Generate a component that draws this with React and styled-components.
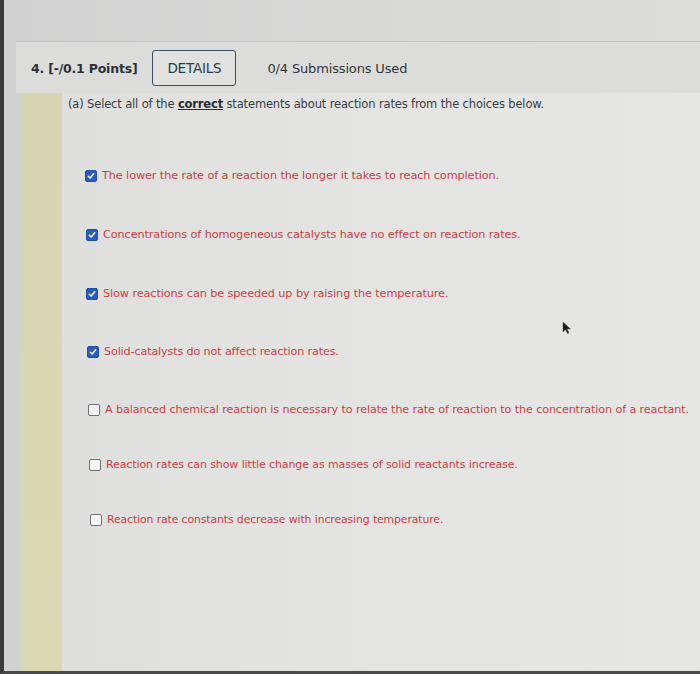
import React from "react";
import styled, { createGlobalStyle } from "styled-components";

const Global = createGlobalStyle`
  html, body {
    margin: 0;
    padding: 0;
    background: #d6d7d5;
  }
  body {
    font-family: "DejaVu Sans", Verdana, sans-serif;
  }
`;

const Screen = styled.div`
  position: relative;
  width: 700px;
  height: 674px;
  overflow: hidden;
  box-sizing: border-box;
  border-left: 4px solid #3b3b3d;
  border-bottom: 3px solid #4a4a4a;
  background: linear-gradient(90deg, #d1d2d1 0%, #d9dad8 60%, #dcdddb 100%);
  padding-top: 41px;
  display: flex;
  flex-direction: column;
`;

const Question = styled.div`
  margin-left: 12px;
  flex: 1;
  display: flex;
  flex-direction: column;
`;

const Header = styled.div`
  height: 52px;
  box-sizing: border-box;
  border-top: 1px solid #c4c5c3;
  background: #dcdddb;
  display: flex;
  align-items: center;
  padding: 1px 0 0 15px;
  color: #2e3136;
`;

const Points = styled.span`
  font-weight: bold;
  font-size: 12.5px;
  letter-spacing: -0.2px;
`;

const DetailsButton = styled.button`
  margin-left: 15px;
  width: 84px;
  height: 36px;
  box-sizing: border-box;
  border: 1.5px solid #3a4f68;
  border-radius: 3px;
  background: #e1e2e0;
  color: #2a3a50;
  font-family: "DejaVu Sans", Verdana, sans-serif;
  font-size: 13.5px;
  letter-spacing: -0.2px;
`;

const Submissions = styled.span`
  margin-left: 31px;
  font-size: 13px;
  letter-spacing: -0.15px;
  color: #33363a;
`;

const Body = styled.div`
  flex: 1;
  display: flex;
  padding-left: 5px;
`;

const Stripe = styled.div`
  width: 41px;
  background: linear-gradient(180deg, #d8d6b2 0%, #dad8b3 100%);
`;

const Content = styled.div`
  flex: 1;
  background: linear-gradient(90deg, #dfe0de 0%, #e4e5e3 50%, #e6e7e5 100%);
  padding: 3px 0 0 6px;
`;

const Prompt = styled.p`
  margin: 0;
  font-size: 11.5px;
  letter-spacing: -0.15px;
  color: #3a3d42;
  line-height: 16px;
`;

const Strong = styled.span`
  font-weight: bold;
  text-decoration: underline;
  color: #2a2d32;
`;

const Options = styled.div`
  display: flex;
  flex-direction: column;
  padding: 56px 0 0 17px;
`;

const Option = styled.label`
  display: flex;
  align-items: center;
  gap: 5px;
  font-size: ${(p) => p.$size}px;
  line-height: 16px;
  letter-spacing: -0.1px;
  color: #cc3e44;
  white-space: nowrap;
  margin-top: ${(p) => p.$top}px;
  margin-left: ${(p) => p.$shift}px;
`;

const Box = styled.span`
  width: 12px;
  height: 12px;
  flex: none;
  box-sizing: border-box;
  border-radius: 2px;
  border: ${(p) => (p.$checked ? "1px solid #1f4fa8" : "1.2px solid #6c6f75")};
  background: ${(p) => (p.$checked ? "#2a5cc0" : "#f4f5f4")};
  display: flex;
  align-items: center;
  justify-content: center;
`;

const Cursor = styled.svg`
  position: absolute;
  left: 558px;
  top: 321px;
`;

const options = [
  { text: "The lower the rate of a reaction the longer it takes to reach completion.", checked: true, shift: 0, top: 0, size: 11.25 },
  { text: "Concentrations of homogeneous catalysts have no effect on reaction rates.", checked: true, shift: 1, top: 43, size: 11.25 },
  { text: "Slow reactions can be speeded up by raising the temperature.", checked: true, shift: 1, top: 43, size: 11.25 },
  { text: "Solid-catalysts do not affect reaction rates.", checked: true, shift: 2, top: 42, size: 11.1 },
  { text: "A balanced chemical reaction is necessary to relate the rate of reaction to the concentration of a reactant.", checked: false, shift: 3, top: 42, size: 11.15 },
  { text: "Reaction rates can show little change as masses of solid reactants increase.", checked: false, shift: 4, top: 39, size: 11 },
  { text: "Reaction rate constants decrease with increasing temperature.", checked: false, shift: 5, top: 39, size: 10.85 },
];

const Check = () => (
  <svg width="8" height="8" viewBox="0 0 8 8">
    <path d="M1.3 4.2 L3.2 6 L6.7 1.8" fill="none" stroke="#fff" strokeWidth="1.5" strokeLinecap="round" strokeLinejoin="round" />
  </svg>
);

export default function App() {
  return (
    <>
      <Global />
      <Screen>
        <Question>
          <Header>
            <Points>4. [-/0.1 Points]</Points>
            <DetailsButton>DETAILS</DetailsButton>
            <Submissions>0/4 Submissions Used</Submissions>
          </Header>
          <Body>
            <Stripe />
            <Content>
              <Prompt>
                (a) Select all of the <Strong>correct</Strong> statements about reaction rates from the choices below.
              </Prompt>
              <Options>
                {options.map((o) => (
                  <Option key={o.text} $shift={o.shift} $top={o.top} $size={o.size}>
                    <Box $checked={o.checked}>{o.checked && <Check />}</Box>
                    {o.text}
                  </Option>
                ))}
              </Options>
            </Content>
          </Body>
        </Question>
        <Cursor width="10" height="14" viewBox="0 0 10 14">
          <path d="M1 1 L1 11 L3.5 8.6 L5.5 12.5 L7 11.8 L5 8 L8.5 8 Z" fill="#1a1a1a" stroke="#555" strokeWidth="0.5" />
        </Cursor>
      </Screen>
    </>
  );
}
